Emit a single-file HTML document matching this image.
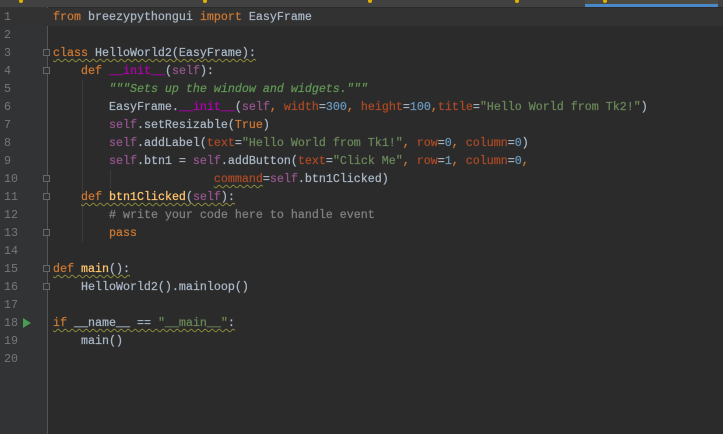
<!DOCTYPE html>
<html><head><meta charset="utf-8"><style>
body{margin:0;width:723px;height:434px;background:#2b2b2b;overflow:hidden;position:relative;font-family:"Liberation Mono",monospace;font-size:11.67px;}
.tabs{position:absolute;left:0;top:0;width:723px;height:7px;background:#414141;}
.act{position:absolute;left:585px;top:0;width:133px;height:7px;background:#4b4a42;}
.act:after{content:"";position:absolute;left:0;bottom:0;width:100%;height:3px;background:#4a88c7;}
.dot{position:absolute;top:0;width:4px;height:3px;background:#e0b000;border-radius:0 0 2px 2px;}
.gut{position:absolute;left:0;top:7px;width:47px;height:427px;background:#313335;border-right:1px solid #555;}
.cur{position:absolute;left:0;top:8px;width:723px;height:18px;background:#323232;}
.ln{position:absolute;left:4px;top:8px;color:#75787a;line-height:18px;white-space:pre;}
.code{position:absolute;left:53px;top:8px;color:#a9b7c6;line-height:18px;white-space:pre;-webkit-text-stroke:0.25px;}
.k{color:#cc7832}.s{color:#94558d}.st{color:#6a8759}.n{color:#6897bb}.a{color:#aa4926}.f{color:#ffc66d}.c{color:#808080}.d{color:#b200b2}.i{font-style:italic;color:#629755}
.w{text-decoration:underline wavy #8a8a3a;text-decoration-thickness:1px;text-underline-offset:2px}
.ig{position:absolute;width:1px;background:#3b3b3b;}
.run{position:absolute;left:23px;top:318px;width:0;height:0;border-left:8px solid #499c54;border-top:5px solid transparent;border-bottom:5px solid transparent;}
.fm{position:absolute;left:43px;width:7px;height:7px;border:1px solid #666;box-sizing:border-box;background:#313335;}
</style></head><body>
<div class="tabs"><div class="act"></div>
<div class="dot" style="left:19px"></div><div class="dot" style="left:203px"></div><div class="dot" style="left:368px"></div><div class="dot" style="left:515px"></div><div class="dot" style="left:603px"></div></div>
<div class="gut"></div>
<div class="cur"></div>
<div class="ig" style="left:82px;top:80px;height:162px"></div>
<div class="ig" style="left:110px;top:170px;height:18px"></div>
<div class="fm" style="top:49px"></div><div class="fm" style="top:67px"></div><div class="fm" style="top:175px"></div><div class="fm" style="top:193px"></div><div class="fm" style="top:229px"></div><div class="fm" style="top:265px"></div><div class="fm" style="top:283px"></div>
<div class="run"></div>
<div class="ln">1
2
3
4
5
6
7
8
9
10
11
12
13
14
15
16
17
18
19
20</div>
<div class="code"><span class="k">from</span> breezypythongui <span class="k">import</span> EasyFrame

<span class="w"><span class="k">class</span> HelloWorld2(EasyFrame):</span>
    <span class="k">def</span> <span class="d">__init__</span>(<span class="s">self</span>):
        <span class="i">"""Sets up the window and widgets."""</span>
        EasyFrame.<span class="d">__init__</span>(<span class="s">self</span><span class="k">,</span> <span class="a">width</span>=<span class="n">300</span><span class="k">,</span> <span class="a">height</span>=<span class="n">100</span><span class="k">,</span><span class="a">title</span>=<span class="st">"Hello World from Tk2!"</span>)
        <span class="s">self</span>.setResizable(<span class="k">True</span>)
        <span class="s">self</span>.addLabel(<span class="a">text</span>=<span class="st">"Hello World from Tk1!"</span><span class="k">,</span> <span class="a">row</span>=<span class="n">0</span><span class="k">,</span> <span class="a">column</span>=<span class="n">0</span>)
        <span class="s">self</span>.btn1 = <span class="s">self</span>.addButton(<span class="a">text</span>=<span class="st">"Click Me"</span><span class="k">,</span> <span class="a">row</span>=<span class="n">1</span><span class="k">,</span> <span class="a">column</span>=<span class="n">0</span><span class="k">,</span>
                       <span class="a w">command</span>=<span class="s">self</span>.btn1Clicked)
    <span class="w"><span class="k">def</span> <span class="f">btn1Clicked</span>(<span class="s">self</span>):</span>
        <span class="c"># write your code here to handle event</span>
        <span class="k">pass</span>

<span class="w"><span class="k">def</span> <span class="f">main</span>():</span>
    HelloWorld2().mainloop()

<span class="w"><span class="k">if</span> __name__ == <span class="st">"__main__"</span>:</span>
    main()
</div>
</body></html>
